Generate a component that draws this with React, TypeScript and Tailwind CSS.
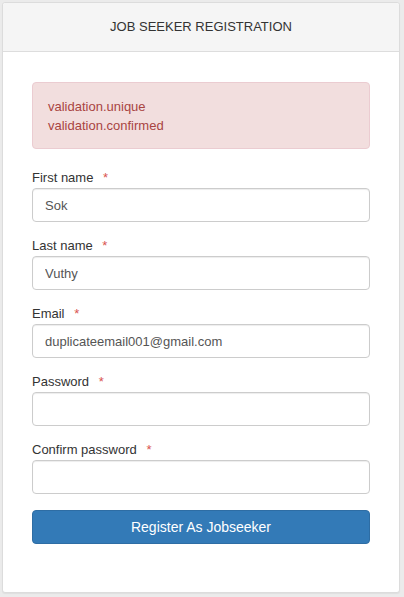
import React from 'react'

const fields = [
  { label: 'First name', value: 'Sok', type: 'text' },
  { label: 'Last name', value: 'Vuthy', type: 'text' },
  { label: 'Email', value: 'duplicateemail001@gmail.com', type: 'email' },
  { label: 'Password', value: '', type: 'password' },
  { label: 'Confirm password', value: '', type: 'password' },
]

export default function App() {
  return (
    <div className="min-h-[597px] bg-[#ebebeb] pt-[2px] pl-[2px] pr-[4px] pb-[4px] text-[13px] text-[#333] [font-family:'Liberation_Sans',Arial,sans-serif]">
      <div className="bg-white border border-[#dcdcdc] rounded-[3px] shadow-[0_1px_1px_rgba(0,0,0,0.05)]">
        {/* header */}
        <div className="h-[49px] bg-[#f5f5f5] border-b border-[#dddddd] flex items-center justify-center rounded-t-[3px]">
          <h3 className="text-[13px] text-[#333]">JOB SEEKER REGISTRATION</h3>
        </div>

        <div className="px-[29px] pt-[30px] pb-[48px]">
          <div className="bg-[#f2dede] border border-[#ebccd1] rounded-[4px] text-[#a94442] px-[15px] pt-[14px] pb-[13px] leading-[19px] mb-[19px]">
            <div>validation.unique</div>
            <div>validation.confirmed</div>
          </div>

          {fields.map((f, i) => (
            <div key={f.label} className={i === 0 ? '' : 'mt-[14px]'}>
              <label className="block leading-[20px]">
                {f.label} <span className="text-[#d9534f] ml-[6px]">*</span>
              </label>
              <input
                type={f.type}
                defaultValue={f.value}
                className="block w-full h-[34px] px-[12px] border border-[#cccccc] rounded-[4px] text-[13px] text-[#555] bg-white outline-none shadow-[inset_0_1px_1px_rgba(0,0,0,0.075)]"
              />
            </div>
          ))}

          <button className="mt-[16px] w-full h-[34px] bg-[#337ab7] border border-[#2e6da4] rounded-[4px] text-white text-[14px]">
            Register As Jobseeker
          </button>
        </div>
      </div>
    </div>
  )
}
